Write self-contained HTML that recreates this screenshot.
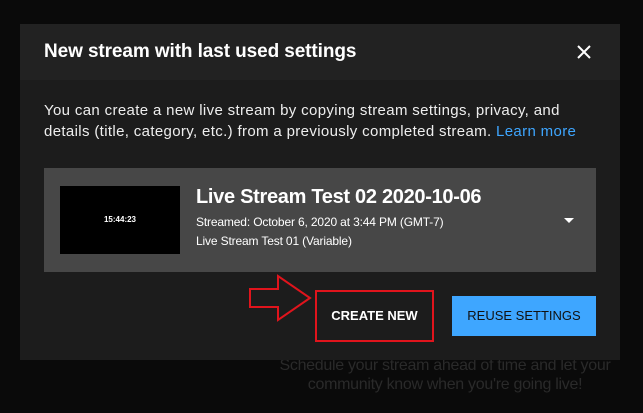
<!DOCTYPE html>
<html><head><style>
*{margin:0;padding:0;box-sizing:border-box}
body{width:643px;height:413px;background:#0a0a0a;font-family:"Liberation Sans",sans-serif;position:relative;overflow:hidden}
.bg{position:absolute;left:250px;width:390px;text-align:center;color:#2a2a2a;font-size:16px;line-height:19px;top:356px;letter-spacing:-0.3px}
.dlg{position:absolute;left:20px;top:24px;width:600px;height:336px;background:#1c1c1c}
.hd{height:56px;background:#222;color:#fff;font-size:19px;font-weight:bold;padding:17px 24px;letter-spacing:-0.1px}
.x{position:absolute;left:556px;top:20px}
.txt{position:absolute;left:24px;top:76px;white-space:nowrap;color:#eee;font-size:15px;line-height:21px;letter-spacing:0.35px}
.txt span{color:#3ea6ff}
.card{position:absolute;left:24px;top:144px;width:552px;height:104px;background:#474747}
.th{position:absolute;left:16px;top:18px;width:120px;height:68px;background:#000;color:#fff;font-size:8px;font-weight:bold;text-align:center;line-height:68px}
.t1{position:absolute;left:152px;top:18px;color:#fff;font-size:20px;font-weight:bold;letter-spacing:-0.3px}
.t2{position:absolute;left:152px;top:47px;color:#fff;font-size:12px;letter-spacing:-0.15px}
.t3{position:absolute;left:152px;top:66px;color:#fff;font-size:12px;letter-spacing:-0.15px}
.car{position:absolute;left:520px;top:50px;width:0;height:0;border-left:5px solid transparent;border-right:5px solid transparent;border-top:5px solid #fff}
.cn{position:absolute;left:295px;top:266px;width:119px;height:52px;border:2px solid #e0141c;color:#fff;font-size:13px;font-weight:bold;text-align:center;line-height:48px}
.rs{position:absolute;left:432px;top:272px;width:144px;height:40px;background:#3ea6ff;color:#111;font-size:13px;text-align:center;line-height:40px}
</style></head><body>
<div class="bg">Schedule your stream ahead of time and let your<br>community know when you're going live!</div>
<div class="dlg">
<div class="hd">New stream with last used settings</div>
<svg class="x" width="16" height="16" viewBox="0 0 16 16"><path d="M2 2L14 14M14 2L2 14" stroke="#fff" stroke-width="2"/></svg>
<div class="txt">You can create a new live stream by copying stream settings, privacy, and<br>details (title, category, etc.) from a previously completed stream. <span>Learn more</span></div>
<div class="card"><div class="th">15:44:23</div>
<div class="t1">Live Stream Test 02 2020-10-06</div>
<div class="t2">Streamed: October 6, 2020 at 3:44 PM (GMT-7)</div>
<div class="t3">Live Stream Test 01 (Variable)</div>
<div class="car"></div></div>
<svg style="position:absolute;left:228px;top:250px" width="66" height="48" viewBox="0 0 66 48"><path d="M2 15H30V2L62 24L30 46V33H2Z" fill="none" stroke="#e0141c" stroke-width="2"/></svg>
<div class="cn">CREATE NEW</div>
<div class="rs">REUSE SETTINGS</div>
</div>
</body></html>
